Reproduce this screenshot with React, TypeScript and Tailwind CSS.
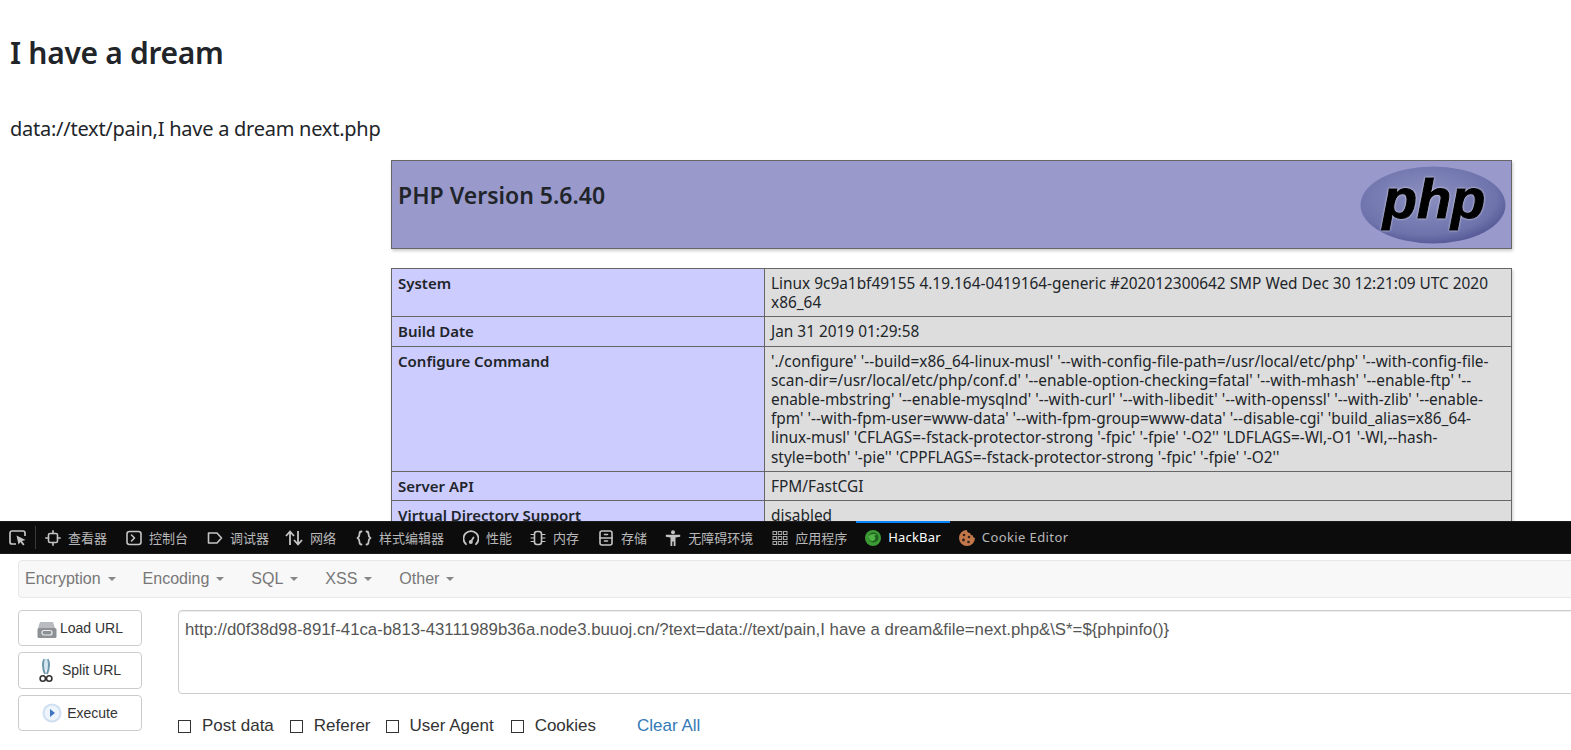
import React from "react";

const infoRows = [
  {
    label: "System",
    lines: [
      "Linux 9c9a1bf49155 4.19.164-0419164-generic #202012300642 SMP Wed Dec 30 12:21:09 UTC 2020",
      "x86_64",
    ],
  },
  { label: "Build Date", lines: ["Jan 31 2019 01:29:58"] },
  {
    label: "Configure Command",
    lines: [
      "'./configure' '--build=x86_64-linux-musl' '--with-config-file-path=/usr/local/etc/php' '--with-config-file-",
      "scan-dir=/usr/local/etc/php/conf.d' '--enable-option-checking=fatal' '--with-mhash' '--enable-ftp' '--",
      "enable-mbstring' '--enable-mysqlnd' '--with-curl' '--with-libedit' '--with-openssl' '--with-zlib' '--enable-",
      "fpm' '--with-fpm-user=www-data' '--with-fpm-group=www-data' '--disable-cgi' 'build_alias=x86_64-",
      "linux-musl' 'CFLAGS=-fstack-protector-strong '-fpic' '-fpie' '-O2'' 'LDFLAGS=-Wl,-O1 '-Wl,--hash-",
      "style=both' '-pie'' 'CPPFLAGS=-fstack-protector-strong '-fpic' '-fpie' '-O2''",
    ],
  },
  { label: "Server API", lines: ["FPM/FastCGI"] },
  { label: "Virtual Directory Support", lines: ["disabled"] },
];

function Ico({ children }: { children: React.ReactNode }) {
  return (
    <svg
      width="16"
      height="16"
      viewBox="0 0 16 16"
      fill="none"
      stroke="#c4c4c4"
      strokeWidth="1.6"
      strokeLinecap="round"
      strokeLinejoin="round"
      className="shrink-0"
    >
      {children}
    </svg>
  );
}

const tabs: { name: string; pad: string; icon: React.ReactNode }[] = [
  {
    name: "查看器",
    pad: "pl-[9px]",
    icon: (
      <Ico>
        <rect x="3.5" y="3.5" width="9" height="9" rx="1.5" />
        <path d="M8 .8v2.7M8 12.5v2.7M.8 8h2.7M12.5 8h2.7" />
      </Ico>
    ),
  },
  {
    name: "控制台",
    pad: "pl-[9px]",
    icon: (
      <Ico>
        <rect x="1" y="1.5" width="14" height="13" rx="2.5" />
        <path d="M5.5 5l3 3-3 3" />
      </Ico>
    ),
  },
  {
    name: "调试器",
    pad: "pl-[9px]",
    icon: (
      <Ico>
        <path d="M1.5 3h8.5l4.5 5-4.500 5H1.500z" />
      </Ico>
    ),
  },
  {
    name: "网络",
    pad: "pl-[6px]",
    icon: (
      <svg width="18" height="16" viewBox="0 0 18 16" fill="none" stroke="#c4c4c4" strokeWidth="1.8" className="shrink-0">
        <path d="M5 15V2M1 6l4-4.500L9 6M13 1v13M9 10l4 4.500 4-4.500" />
      </svg>
    ),
  },
  {
    name: "样式编辑器",
    pad: "pl-[10px]",
    icon: (
      <Ico>
        <path d="M5.500 1.500c-2 0-2 1-2 2.500s0 3-2 4c2 1 2 2.500 2 4s0 2.500 2 2.500M10.500 1.500c2 0 2 1 2 2.500s0 3 2 4c-2 1-2 2.500-2 4s0 2.500-2 2.500" strokeWidth="1.800" />
      </Ico>
    ),
  },
  {
    name: "性能",
    pad: "pl-[9px]",
    icon: (
      <Ico>
        <path d="M3 14.200a7.500 7.500 0 1 1 10 0" strokeWidth="1.800" />
        <path d="M8 11.500l2.500-4" strokeWidth="1.700" />
        <circle cx="7.800" cy="12" r="1.200" fill="#c4c4c4" />
      </Ico>
    ),
  },
  {
    name: "内存",
    pad: "pl-[8px]",
    icon: (
      <Ico>
        <rect x="4.500" y="1.500" width="7" height="13" rx="2.500" />
        <path d="M1 4.500h3M1 8h3M1 11.500h3M12 4.500h3M12 8h3M12 11.500h3" strokeWidth="1" />
      </Ico>
    ),
  },
  {
    name: "存储",
    pad: "pl-[9px]",
    icon: (
      <Ico>
        <rect x="2" y="1" width="12" height="14" rx="2" />
        <path d="M2 8h12M6.500 4.500h3M6.500 11h3" />
      </Ico>
    ),
  },
  {
    name: "无障碍环境",
    pad: "pl-[8px]",
    icon: (
      <svg width="16" height="16" viewBox="0 0 16 16" fill="#c4c4c4" className="shrink-0">
        <circle cx="8" cy="2.200" r="2" />
        <path d="M.8 4.800h14.400v1.900L10.500 7.600V16H8.700v-4.500H7.300V16H5.500V7.600L.8 6.700z" />
      </svg>
    ),
  },
  {
    name: "应用程序",
    pad: "pl-[9px]",
    icon: (
      <svg width="16" height="16" viewBox="0 0 16 16" fill="none" stroke="#a8a8a8" strokeWidth="1" className="shrink-0">
        <rect x="1" y="1.500" width="3.500" height="3" />
        <rect x="6.200" y="1.500" width="3.500" height="3" />
        <rect x="11.500" y="1.500" width="3.500" height="3" />
        <rect x="1" y="6.500" width="3.500" height="3" />
        <rect x="6.200" y="6.500" width="3.500" height="3" />
        <rect x="11.500" y="6.500" width="3.500" height="3" />
        <rect x="1" y="11.500" width="3.500" height="3" />
        <rect x="6.200" y="11.500" width="3.500" height="3" />
        <rect x="11.500" y="11.500" width="3.500" height="3" />
      </svg>
    ),
  },
];

function Toolbar() {
  return (
    <div
      className="flex h-[33px] shrink-0 items-center bg-[#0c0c0d] border-t border-b border-[#1c1c1e] text-[13px] text-[#b8b8b8]"
      style={{ fontFamily: '"Noto Sans CJK SC", "Noto Sans", sans-serif' }}
    >
      <div className="flex items-center pl-[9px] pr-[8px]">
        <svg width="18" height="16" viewBox="0 0 18 16" fill="none" className="shrink-0">
          <path d="M7 14H3a2 2 0 0 1-2-2V3a2 2 0 0 1 2-2h11a2 2 0 0 1 2 2v3" stroke="#c4c4c4" strokeWidth="1.700" />
          <path d="M7.500 5.500l9 4.500-3.500 1 2.500 3.500-1.500 1-2.500-3.500-2 2.500z" fill="#c4c4c4" />
        </svg>
      </div>
      <div className="h-[23px] w-px bg-[#3a3a3c]" />
      {tabs.map((t) => (
        <div key={t.name} className={`flex h-full items-center gap-[7px] ${t.pad} pr-[10px]`}>
          {t.icon}
          <span className="leading-none">{t.name}</span>
        </div>
      ))}
      <div className="relative -ml-px flex h-full items-center gap-[7px] px-[9px] text-white">
        <div className="absolute left-0 right-0 top-[-1px] h-[2px] bg-[#0a84ff]" />
        <svg width="16" height="16" viewBox="0 0 16 16" className="shrink-0">
          <circle cx="8" cy="8" r="8" fill="#3c9a34" />
          <circle cx="8.500" cy="7.500" r="5" fill="#1f5f20" />
          <path d="M3 7c2-3 6-4 9-2-1 0-2 0-3 1 2 1 2 4-1 5-2 .5-4-1-4-3z" fill="#4eb244" />
        </svg>
        <span className="leading-none tracking-[0.2px]" style={{ fontFamily: '"Noto Sans", sans-serif' }}>
          HackBar
        </span>
      </div>
      <div className="flex h-full items-center gap-[7px] px-[9px]">
        <svg width="16" height="16" viewBox="0 0 16 16" className="shrink-0">
          <path d="M8 0a3 3 0 0 0 3 3 3 3 0 0 0 3 2.500 2 2 0 0 0 2 2.500A8 8 0 1 1 8 0z" fill="#c2784a" />
          <circle cx="5" cy="5" r="1.300" fill="#33211a" />
          <circle cx="10" cy="7" r="1.300" fill="#33211a" />
          <circle cx="4.500" cy="10" r="1.400" fill="#33211a" />
          <circle cx="9.500" cy="12" r="1.300" fill="#33211a" />
        </svg>
        <span className="leading-none tracking-[0.4px]" style={{ fontFamily: '"Noto Sans", sans-serif' }}>
          Cookie Editor
        </span>
      </div>
    </div>
  );
}

function Caret() {
  return <span className="ml-[7px] inline-block align-middle border-x-[4px] border-t-[4px] border-x-transparent border-t-[#888]" />;
}

function HackButton({ icon, label, h }: { icon: React.ReactNode; label: string; h: string }) {
  return (
    <button className={`flex w-[124px] ${h} items-center justify-center gap-[3px] rounded-[4px] border border-[#ccc] bg-white text-[14px] text-[#333]`}>
      {icon}
      <span>{label}</span>
    </button>
  );
}

function Check({ label, mr }: { label: string; mr: string }) {
  return (
    <label className={`flex items-center ${mr}`}>
      <span className="mr-[11px] h-[13px] w-[13px] border border-[#333] bg-white" />
      <span>{label}</span>
    </label>
  );
}

export default function App() {
  return (
    <div className="flex h-[750px] w-[1571px] flex-col overflow-hidden bg-white">
      <div
        className="h-[521px] shrink-0 overflow-hidden text-[#212529]"
        style={{ fontFamily: '"Noto Sans", "Open Sans", sans-serif' }}
      >
        <h1 className="pl-[10px] pt-[31px] text-[30px] font-semibold leading-[44px] tracking-[-0.3px]">I have a dream</h1>
        <p className="pl-[10px] pt-[42px] text-[20px] leading-[24px] tracking-[-0.25px]">data://text/pain,I have a dream next.php</p>
        <div className="ml-[391px] mt-[19px] w-[1121px]">
          <div className="flex h-[89px] items-start justify-between border border-[#666] bg-[#9999cc] pl-[6px] pr-[5px] shadow-[1px_2px_3px_#ccc]">
            <h2 className="mt-[19px] text-[23px] font-semibold leading-[30px]">PHP Version 5.6.40</h2>
            <svg width="146" height="78" viewBox="0 0 146 78" className="mt-[5px]">
              <defs>
                <radialGradient id="logoFill" cx="45%" cy="40%" r="65%">
                  <stop offset="0%" stopColor="#8c90c0" />
                  <stop offset="75%" stopColor="#6e73ac" />
                  <stop offset="100%" stopColor="#4e5290" />
                </radialGradient>
              </defs>
              <ellipse cx="73" cy="39" rx="72.500" ry="38.500" fill="url(#logoFill)" />
              <text
                x="74"
                y="52"
                textAnchor="middle"
                fontSize="56"
                fontWeight="700"
                fontStyle="italic"
                fill="#000"
                stroke="#000"
                strokeWidth="1.100"
                className="[filter:drop-shadow(0_0_1px_#e8e8f4)]"
                style={{ fontFamily: '"Liberation Sans", sans-serif' }}
              >
                php
              </text>
            </svg>
          </div>
          <table className="mt-[19px] w-full table-fixed border-collapse text-[15px] leading-[19.2px] shadow-[1px_2px_3px_#ccc]">
            <tbody>
              {infoRows.map((r) => (
                <tr key={r.label}>
                  <td className="w-[373px] border border-[#666] bg-[#ccccff] px-[6px] pt-[5px] pb-[4px] align-top font-semibold">
                    {r.label}
                  </td>
                  <td className="border border-[#666] bg-[#dddddd] px-[6px] pt-[5px] pb-[4px] align-top text-[15.4px]">
                    {r.lines.map((l) => (
                      <div key={l} className="whitespace-nowrap">
                        {l}
                      </div>
                    ))}
                  </td>
                </tr>
              ))}
            </tbody>
          </table>
        </div>
      </div>

      <Toolbar />

      <div className="flex-1 overflow-hidden pl-[18px]" style={{ fontFamily: '"Liberation Sans", sans-serif' }}>
        <div className="mt-[6px] flex h-[38px] w-[1600px] items-center gap-[27px] rounded-[4px] border border-[#e7e7e7] bg-[#f8f8f8] pl-[6px] text-[16px] text-[#777]">
          {["Encryption", "Encoding", "SQL", "XSS", "Other"].map((m) => (
            <span key={m} className="flex items-center">
              {m}
              <Caret />
            </span>
          ))}
        </div>
        <div className="mt-[12px] flex gap-[36px]">
          <div className="flex flex-col gap-[6px]">
            <HackButton
              h="h-[36px]"
              label="Load URL"
              icon={
                <svg width="20" height="18" viewBox="0 0 20 18" className="mt-[3px] shrink-0">
                  <path d="M3 1h13l2 6H1z" fill="#b8bcc0" />
                  <rect x="0.500" y="7" width="19" height="10" rx="1.500" fill="#8d9195" />
                  <rect x="5" y="9.500" width="10" height="4.500" rx="2" fill="none" stroke="#eee" strokeWidth="1.200" />
                </svg>
              }
            />
            <HackButton
              h="h-[37px]"
              label="Split URL"
              icon={
                <svg width="14" height="25" viewBox="0 0 14 25" fill="none" className="mr-[6px] shrink-0">
                  <path d="M5.500 1C3 5 4 11 6 16M8.500 1c2.500 4 1.500 10-.5 15" stroke="#6f97ad" strokeWidth="2" />
                  <path d="M6 1v11M8 1v11" stroke="#a9cde0" strokeWidth="1" />
                  <circle cx="3.800" cy="20.500" r="2.700" stroke="#333" strokeWidth="1.600" />
                  <circle cx="10.200" cy="20.500" r="2.700" stroke="#333" strokeWidth="1.600" />
                </svg>
              }
            />
            <HackButton
              h="h-[36px]"
              label="Execute"
              icon={
                <svg width="20" height="20" viewBox="0 0 20 20" className="mr-[2px] shrink-0">
                  <circle cx="10" cy="10" r="9.500" fill="#cfdff2" />
                  <circle cx="10" cy="10" r="7.500" fill="#eef4fb" />
                  <path d="M8 6l5 4-5 4z" fill="#3f76c4" />
                </svg>
              }
            />
          </div>
          <div>
            <div className="h-[84px] w-[1500px] rounded-[4px] border border-[#ccc] bg-white px-[6px] py-[9px] text-[16.8px] leading-[20px] text-[#555] shadow-[inset_0_1px_1px_rgba(0,0,0,0.075)] whitespace-nowrap">
              {"http://d0f38d98-891f-41ca-b813-43111989b36a.node3.buuoj.cn/?text=data://text/pain,I have a dream&file=next.php&\\S*=${phpinfo()}"}
            </div>
            <div className="mt-[22px] flex items-center text-[17px] leading-[20px] text-[#333]">
              <Check label="Post data" mr="mr-[16px]" />
              <Check label="Referer" mr="mr-[15px]" />
              <Check label="User Agent" mr="mr-[17px]" />
              <Check label="Cookies" mr="mr-[41px]" />
              <span className="text-[#337ab7]">Clear All</span>
            </div>
          </div>
        </div>
      </div>
    </div>
  );
}
